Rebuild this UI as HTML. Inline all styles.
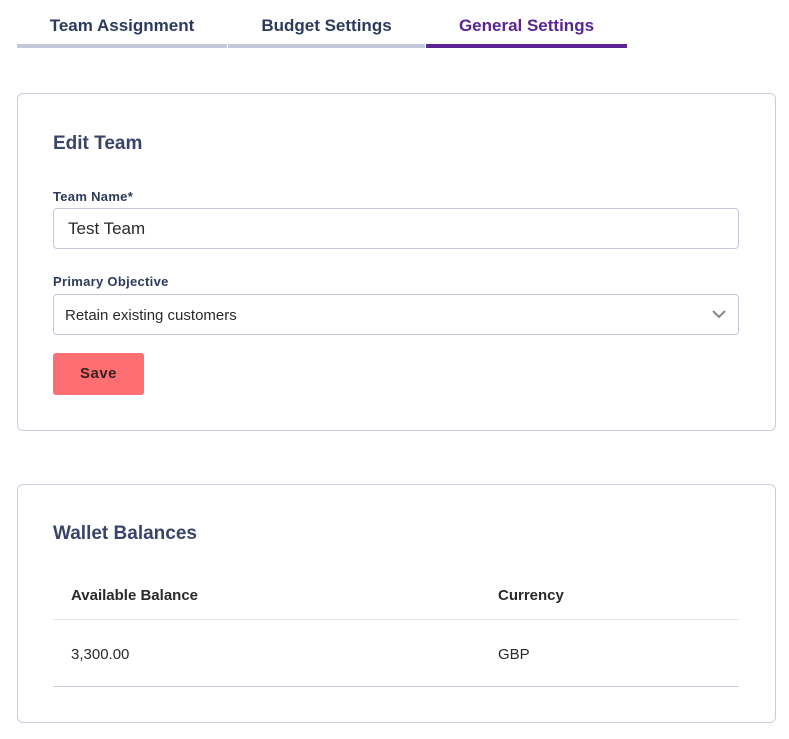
<!DOCTYPE html>
<html><head><style>
*{box-sizing:border-box;margin:0;padding:0}
body{width:789px;height:739px;background:#fff;font-family:"Liberation Sans",sans-serif;color:#2a2a2a;position:relative;overflow:hidden}
.tab{position:absolute;top:0;height:48px;border-bottom:4px solid #c2c8da;text-align:center;font-weight:bold;font-size:17px;color:#2c3a5c;line-height:52px}
.card{position:absolute;left:17px;width:759px;border:1px solid #c9cfdc;border-radius:6px}
h2{position:absolute;left:35px;font-size:19px;color:#3a4468;font-weight:bold}
.lbl{position:absolute;left:35px;font-size:13px;color:#2c3a5c;font-weight:bold;letter-spacing:.3px}
.inp{position:absolute;left:35px;width:686px;height:41px;border:1px solid #c2c8da;border-radius:4px}
</style></head><body>
<div class="tab" style="left:17px;width:210px">Team Assignment</div>
<div class="tab" style="left:228px;width:197px">Budget Settings</div>
<div class="tab" style="left:426px;width:201px;color:#5a2590;border-color:#5a2590">General Settings</div>

<div class="card" style="top:93px;height:338px">
<h2 style="top:39px">Edit Team</h2>
<div class="lbl" style="top:95px">Team Name*</div>
<div class="inp" style="top:114px;font-size:17px;padding:10px 14px">Test Team</div>
<div class="lbl" style="top:180px">Primary Objective</div>
<div class="inp" style="top:200px;font-size:15px;padding:12px 11px">Retain existing customers
<svg style="position:absolute;right:12px;top:15px" width="14" height="9" viewBox="0 0 14 9"><path d="M1 1l6 6 6-6" fill="none" stroke="#888" stroke-width="2"/></svg></div>
<div style="position:absolute;left:35px;top:259px;width:91px;height:42px;background:#fe6f73;border-radius:3px;text-align:center;line-height:42px;font-weight:bold;font-size:15px;color:#3a2020;letter-spacing:.5px">Save</div>
</div>

<div class="card" style="top:484px;height:239px">
<h2 style="top:38px">Wallet Balances</h2>
<div style="position:absolute;left:53px;top:102px;font-weight:bold;font-size:15px;color:#2a2a2a">Available Balance</div>
<div style="position:absolute;left:480px;top:102px;font-weight:bold;font-size:15px;color:#2a2a2a">Currency</div>
<div style="position:absolute;left:35px;top:134px;width:686px;border-top:1px solid #e3e6ee"></div>
<div style="position:absolute;left:53px;top:161px;font-size:15px">3,300.00</div>
<div style="position:absolute;left:480px;top:161px;font-size:15px">GBP</div>
<div style="position:absolute;left:35px;top:201px;width:686px;border-top:1px solid #c9cfdc"></div>
</div>
</body></html>
